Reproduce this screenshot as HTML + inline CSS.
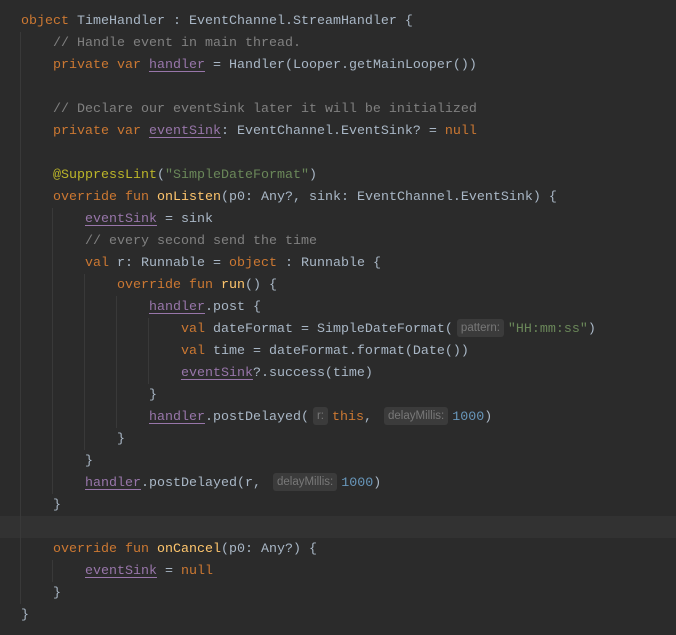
<!DOCTYPE html>
<html><head><meta charset="utf-8"><style>
html,body{margin:0;padding:0;background:#2b2b2b;width:676px;height:635px;overflow:hidden}
#c{position:absolute;left:21px;top:11px;margin:0;font-family:"Liberation Mono",monospace;font-size:13.33px;line-height:22px;color:#a9b7c6;white-space:pre}
.k{color:#cc7832}.c{color:#808080}.p{color:#9876aa;text-decoration:underline;text-underline-offset:3px;text-decoration-thickness:1px}
.s{color:#6a8759}.a{color:#bbb529}.n{color:#6897bb}.f{color:#ffc66d}
.h{display:inline-block;background:#3b3b3b;color:#787878;font-family:"Liberation Sans",sans-serif;font-size:11.5px;line-height:18px;height:18px;padding:0 4px;border-radius:3px;margin:0 4px 0 4px;vertical-align:1px}
.hl{position:absolute;left:0;width:676px;top:516px;height:22px;background:#323232}
.g{position:absolute;width:1px;background:#393939}
</style></head><body>
<div class="hl"></div>
<div class="g" style="left:20px;top:32px;height:572px"></div>
<div class="g" style="left:52px;top:208px;height:286px"></div>
<div class="g" style="left:84px;top:274px;height:176px"></div>
<div class="g" style="left:116px;top:296px;height:132px"></div>
<div class="g" style="left:148px;top:318px;height:66px"></div>
<div class="g" style="left:52px;top:560px;height:22px"></div>
<pre id="c"><span class="k">object</span> TimeHandler : EventChannel.StreamHandler {
    <span class="c">// Handle event in main thread.</span>
    <span class="k">private var</span> <span class="p">handler</span> = Handler(Looper.getMainLooper())

    <span class="c">// Declare our eventSink later it will be initialized</span>
    <span class="k">private var</span> <span class="p">eventSink</span>: EventChannel.EventSink? = <span class="k">null</span>

    <span class="a">@SuppressLint</span>(<span class="s">"SimpleDateFormat"</span>)
    <span class="k">override fun</span> <span class="f">onListen</span>(p0: Any?, sink: EventChannel.EventSink) {
        <span class="p">eventSink</span> = sink
        <span class="c">// every second send the time</span>
        <span class="k">val</span> r: Runnable = <span class="k">object</span> : Runnable {
            <span class="k">override fun</span> <span class="f">run</span>() {
                <span class="p">handler</span>.post {
                    <span class="k">val</span> dateFormat = SimpleDateFormat(<span class="h">pattern:</span><span class="s">"HH:mm:ss"</span>)
                    <span class="k">val</span> time = dateFormat.format(Date())
                    <span class="p">eventSink</span>?.success(time)
                }
                <span class="p">handler</span>.postDelayed(<span class="h">r:</span><span class="k">this</span>, <span class="h">delayMillis:</span><span class="n">1000</span>)
            }
        }
        <span class="p">handler</span>.postDelayed(r, <span class="h">delayMillis:</span><span class="n">1000</span>)
    }

    <span class="k">override fun</span> <span class="f">onCancel</span>(p0: Any?) {
        <span class="p">eventSink</span> = <span class="k">null</span>
    }
}</pre>
</body></html>
